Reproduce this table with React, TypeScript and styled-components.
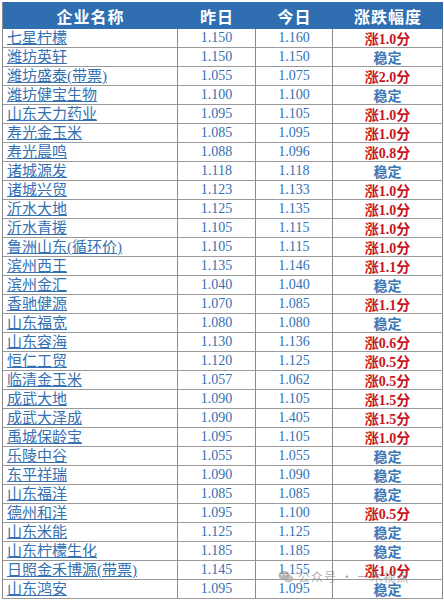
import React from 'react';
import styled, { createGlobalStyle } from 'styled-components';

const Global = createGlobalStyle`
  html, body { margin: 0; padding: 0; background: #ffffff; }
  body { font-family: "Liberation Serif", "Noto Sans CJK SC", serif; }
`;

type Row = [string, string, string, string];

const rows: Row[] = [
  ['七星柠檬', '1.150', '1.160', '涨1.0分'],
  ['潍坊英轩', '1.150', '1.150', '稳定'],
  ['潍坊盛泰(带票)', '1.055', '1.075', '涨2.0分'],
  ['潍坊健宝生物', '1.100', '1.100', '稳定'],
  ['山东天力药业', '1.095', '1.105', '涨1.0分'],
  ['寿光金玉米', '1.085', '1.095', '涨1.0分'],
  ['寿光晨鸣', '1.088', '1.096', '涨0.8分'],
  ['诸城源发', '1.118', '1.118', '稳定'],
  ['诸城兴贸', '1.123', '1.133', '涨1.0分'],
  ['沂水大地', '1.125', '1.135', '涨1.0分'],
  ['沂水青援', '1.105', '1.115', '涨1.0分'],
  ['鲁洲山东(循环价)', '1.105', '1.115', '涨1.0分'],
  ['滨州西王', '1.135', '1.146', '涨1.1分'],
  ['滨州金汇', '1.040', '1.040', '稳定'],
  ['香驰健源', '1.070', '1.085', '涨1.1分'],
  ['山东福宽', '1.080', '1.080', '稳定'],
  ['山东容海', '1.130', '1.136', '涨0.6分'],
  ['恒仁工贸', '1.120', '1.125', '涨0.5分'],
  ['临清金玉米', '1.057', '1.062', '涨0.5分'],
  ['成武大地', '1.090', '1.105', '涨1.5分'],
  ['成武大泽成', '1.090', '1.405', '涨1.5分'],
  ['禹城保龄宝', '1.095', '1.105', '涨1.0分'],
  ['乐陵中谷', '1.055', '1.055', '稳定'],
  ['东平祥瑞', '1.090', '1.090', '稳定'],
  ['山东福洋', '1.085', '1.085', '稳定'],
  ['德州和洋', '1.095', '1.100', '涨0.5分'],
  ['山东米能', '1.125', '1.125', '稳定'],
  ['山东柠檬生化', '1.185', '1.185', '稳定'],
  ['日照金禾博源(带票)', '1.145', '1.155', '涨1.0分'],
  ['山东鸿安', '1.095', '1.095', '稳定'],
];

const Page = styled.div`
  position: relative;
  width: 444px;
  height: 600px;
  overflow: hidden;
  padding: 2px 2px 0 2px;
  box-sizing: border-box;
`;

const Table = styled.div`
  display: grid;
  grid-template-columns: 175px 78px 77px 110px;
  border-left: 1px solid #8a8a8a;
`;

const Head = styled.div`
  height: 27px;
  background: #2f6fb1;
  color: #ffffff;
  font-size: 16px;
  font-weight: bold;
  display: flex;
  align-items: center;
  justify-content: center;
  letter-spacing: 1px;
`;

const Cell = styled.div<{ $align?: 'left' | 'center' }>`
  height: 19px;
  box-sizing: border-box;
  border-right: 1px solid #8a8a8a;
  border-bottom: 1px solid #9a9a9a;
  display: flex;
  align-items: center;
  justify-content: ${p => (p.$align === 'left' ? 'flex-start' : 'center')};
  padding-left: ${p => (p.$align === 'left' ? '4px' : '0')};
  color: #3470b2;
  font-size: 14px;
  white-space: nowrap;
  overflow: hidden;
`;

const Name = styled.span`
  font-size: 15px;
  text-decoration: underline;
  text-underline-offset: 1px;
  line-height: 18px;
`;

const Change = styled.span<{ $up: boolean }>`
  font-size: 14px;
  font-weight: bold;
  color: ${p => (p.$up ? '#c8161d' : '#3b78b8')};
`;

const Watermark = styled.div`
  position: absolute;
  left: 278px;
  top: 568px;
  display: flex;
  align-items: center;
  gap: 4px;
  color: rgba(120, 120, 120, 0.6);
  font-family: "Noto Sans CJK SC", sans-serif;
  font-size: 12px;
  letter-spacing: 1px;
  pointer-events: none;
`;

function WeChat() {
  return (
    <svg width="16" height="14" viewBox="0 0 16 14">
      <ellipse cx="6" cy="5.5" rx="5.5" ry="4.6" fill="rgba(140,140,140,0.6)" />
      <ellipse cx="10.5" cy="8.5" rx="4.8" ry="4" fill="rgba(170,170,170,0.65)" />
      <circle cx="4" cy="4.5" r="0.8" fill="#fff" />
      <circle cx="7.8" cy="4.5" r="0.8" fill="#fff" />
    </svg>
  );
}

export default function App() {
  return (
    <Page>
      <Global />
      <Table>
        <Head>企业名称</Head>
        <Head>昨日</Head>
        <Head>今日</Head>
        <Head>涨跌幅度</Head>
        {rows.map(([name, y, t, c]) => (
          <React.Fragment key={name}>
            <Cell $align="left"><Name>{name}</Name></Cell>
            <Cell>{y}</Cell>
            <Cell>{t}</Cell>
            <Cell><Change $up={c !== '稳定'}>{c}</Change></Cell>
          </React.Fragment>
        ))}
      </Table>
      <Watermark>
        <WeChat />
        <span>公众号 · 一木视点</span>
      </Watermark>
    </Page>
  );
}
